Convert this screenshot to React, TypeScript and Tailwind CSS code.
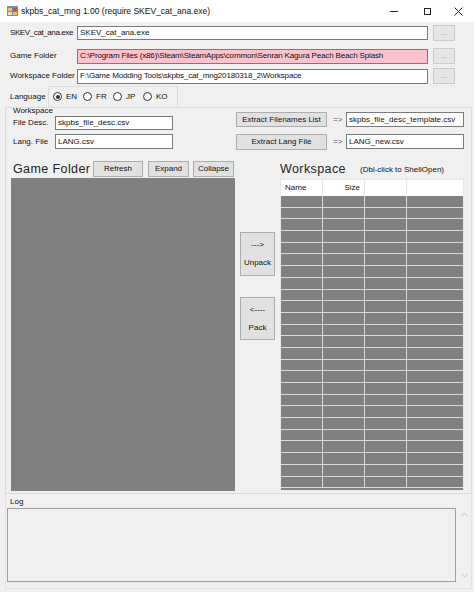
import React from 'react'

const font = { fontFamily: '"Liberation Sans", Arial, sans-serif' }

function TextBox({ value, className }: { value: string; className: string }) {
  return (
    <div
      className={`flex items-center border border-[#7a7a7a] bg-white pl-[2px] text-[8px] leading-none whitespace-nowrap overflow-hidden ${className}`}
    >
      {value}
    </div>
  )
}

function Btn({ title, className }: { title: React.ReactNode; className: string }) {
  return (
    <div
      className={`flex flex-col items-center justify-center border border-[#adadad] bg-[#e1e1e1] text-[8px] leading-none ${className}`}
    >
      {title}
    </div>
  )
}

function DotsBtn() {
  return (
    <div className="ml-[5px] flex h-[16px] w-[22px] items-center justify-center border border-[#cccccc] bg-[#e6e6e6] text-[8px] leading-none text-[#a0a0a0]">
      ...
    </div>
  )
}

function Radio({ label, checked }: { label: string; checked?: boolean }) {
  return (
    <div className="flex items-center gap-[4px] w-[30px]">
      <div className="flex h-[9px] w-[9px] items-center justify-center rounded-full border border-[#333] bg-white">
        {checked && <div className="h-[4px] w-[4px] rounded-full bg-[#333]" />}
      </div>
      <span className="text-[8px] leading-none">{label}</span>
    </div>
  )
}

export default function App() {
  const rows = Array.from({ length: 25 })
  return (
    <div className="relative h-[592px] w-[474px] overflow-hidden bg-[#f0f0f0] text-[#111]" style={font}>
      {/* title bar */}
      <div className="flex h-[22px] items-center bg-white">
        <svg className="ml-[7px]" width="11" height="10" viewBox="0 0 11 10">
          <rect x="0" y="0" width="11" height="10" fill="#6b8fc4" />
          <rect x="1" y="2" width="4" height="3" fill="#f3c53a" />
          <rect x="6" y="2" width="4" height="3" fill="#d94a3a" />
          <rect x="1" y="6" width="4" height="3" fill="#e8e1c8" />
          <rect x="6" y="6" width="4" height="3" fill="#f3c53a" />
        </svg>
        <span className="ml-[3px] text-[8.5px] leading-none">skpbs_cat_mng 1.00 (require SKEV_cat_ana.exe)</span>
        <div className="ml-auto flex items-center">
          <div className="h-[1px] w-[8px] bg-[#222]" />
          <div className="ml-[26px] h-[7px] w-[7px] border border-[#222]" />
          <svg className="ml-[23px] mr-[11px]" width="9" height="9" viewBox="0 0 9 9">
            <path d="M0.5 0.5 L8.5 8.5 M8.5 0.5 L0.5 8.5" stroke="#222" strokeWidth="1" />
          </svg>
        </div>
      </div>

      {/* path rows */}
      <div className="mt-[3px] flex h-[16px] items-center pl-[10px]">
        <span className="w-[67px] text-[8px] leading-none tracking-[-0.4px]">SKEV_cat_ana.exe</span>
        <TextBox value="SKEV_cat_ana.exe" className="h-[14px] w-[351px]" />
        <DotsBtn />
      </div>
      <div className="mt-[7px] flex h-[16px] items-center pl-[10px]">
        <span className="w-[67px] text-[8px] leading-none">Game Folder</span>
        <TextBox
          value="C:\Program Files (x86)\Steam\SteamApps\common\Senran Kagura Peach Beach Splash"
          className="h-[15px] w-[351px] !bg-[#fcc3cf] tracking-[-0.15px]"
        />
        <DotsBtn />
      </div>
      <div className="mt-[4px] flex h-[16px] items-center pl-[10px]">
        <span className="w-[67px] text-[8px] leading-none">Workspace Folder</span>
        <TextBox value="F:\Game Modding Tools\skpbs_cat_mng20180318_2\Workspace" className="h-[15px] w-[351px] tracking-[-0.15px]" />
        <DotsBtn />
      </div>

      {/* language */}
      <div className="mt-[2px] flex h-[21px] items-center pl-[10px]">
        <span className="w-[38px] text-[8px] leading-none">Language</span>
        <div className="flex h-[22px] w-[130px] items-center border border-[#dcdcdc] pl-[4px]">
          <Radio label="EN" checked />
          <Radio label="FR" />
          <Radio label="JP" />
          <Radio label="KO" />
        </div>
      </div>

      {/* main group */}
      <div className="mx-[5px] flex h-[387px] w-[467px] flex-col border border-[#dcdcdc]">
        <div className="flex">
          <div className="ml-[7px] flex flex-col">
            <span className="mt-[-3px] h-[11px] text-[8px] leading-[11px]">Workspace</span>
            <div className="flex h-[14px] items-center">
              <span className="w-[42px] text-[8px] leading-none">File Desc.</span>
              <TextBox value="skpbs_file_desc.csv" className="h-[14px] w-[118px]" />
            </div>
            <div className="mt-[4px] flex h-[15px] items-center">
              <span className="w-[42px] text-[8px] leading-none">Lang. File</span>
              <TextBox value="LANG.csv" className="h-[15px] w-[118px]" />
            </div>
          </div>
          <div className="ml-[63px] flex flex-col">
            <div className="mt-[4px] flex h-[15px] items-center">
              <Btn title="Extract Filenames List" className="h-[15px] w-[91px]" />
              <span className="ml-[6px] w-[13px] text-[8px] leading-none text-[#555]">=&gt;</span>
              <TextBox value="skpbs_file_desc_template.csv" className="h-[15px] w-[118px]" />
            </div>
            <div className="mt-[7px] flex h-[15px] items-center">
              <Btn title="Extract Lang File" className="h-[16px] w-[91px]" />
              <span className="ml-[6px] w-[13px] text-[8px] leading-none text-[#555]">=&gt;</span>
              <TextBox value="LANG_new.csv" className="h-[15px] w-[118px]" />
            </div>
          </div>
        </div>

        <div className="mt-[11px] flex">
          {/* game folder */}
          <div className="ml-[5px] flex w-[224px] flex-col">
            <div className="flex h-[18px] items-center">
              <span className="ml-[2px] w-[80px] text-[12.5px] leading-none tracking-[0.4px] text-[#222]">Game Folder</span>
              <Btn title="Refresh" className="h-[16px] w-[50px]" />
              <Btn title="Expand" className="ml-[5px] h-[16px] w-[41px]" />
              <Btn title="Collapse" className="ml-[4px] h-[16px] w-[41px]" />
            </div>
            <div className="h-[313px] bg-[#808080]" />
          </div>

          {/* pack buttons */}
          <div className="ml-[5px] flex w-[35px] flex-col">
            <Btn
              title={
                <>
                  <span>---&gt;</span>
                  <span className="mt-[10px]">Unpack</span>
                </>
              }
              className="mt-[72px] h-[44px] w-[35px]"
            />
            <Btn
              title={
                <>
                  <span>&lt;----</span>
                  <span className="mt-[10px]">Pack</span>
                </>
              }
              className="mt-[21px] h-[43px] w-[35px]"
            />
          </div>

          {/* workspace */}
          <div className="ml-[5px] flex w-[184px] flex-col">
            <div className="flex h-[19px] items-center">
              <span className="w-[80px] text-[12.5px] leading-none tracking-[0.4px] text-[#222]">Workspace</span>
              <span className="text-[8px] leading-none">(Dbl-click to ShellOpen)</span>
            </div>
            <div className="flex h-[312px] flex-col overflow-hidden border border-[#e8e8e8] bg-[#808080]">
              <div className="flex h-[16px] shrink-0 bg-white text-[8px] leading-none">
                <div className="flex w-[42px] items-center border-r border-[#e5e5e5] pl-[4px]">Name</div>
                <div className="flex w-[42px] items-center justify-end border-r border-[#e5e5e5] pr-[4px]">Size</div>
                <div className="w-[42px] border-r border-[#e5e5e5]" />
                <div className="flex-1" />
              </div>
              {rows.map((_, i) => (
                <div key={i} className="flex h-[11.7px] shrink-0 border-b border-[#d8d8d8]">
                  <div className="w-[42px] border-r border-[#d8d8d8]" />
                  <div className="w-[42px] border-r border-[#d8d8d8]" />
                  <div className="w-[42px] border-r border-[#d8d8d8]" />
                  <div className="flex-1" />
                </div>
              ))}
            </div>
          </div>
        </div>
      </div>

      {/* log */}
      <div className="mx-[5px] flex h-[95px] w-[467px] flex-col border-x border-b border-[#e4e4e4]">
        <span className="ml-[4px] mt-[3px] h-[10px] text-[8px] leading-[10px]">Log</span>
        <div className="mt-[1px] flex">
          <div className="ml-[1px] h-[74px] w-[449px] border border-[#a0a0a0] bg-[#f0f0f0]" />
          <div className="ml-[3px] flex h-[74px] w-[10px] flex-col items-center justify-between py-[4px]">
            <svg width="7" height="5" viewBox="0 0 7 5">
              <path d="M0.5 4 L3.5 1 L6.5 4" stroke="#c0c0c0" fill="none" />
            </svg>
            <svg width="7" height="5" viewBox="0 0 7 5">
              <path d="M0.5 1 L3.5 4 L6.5 1" stroke="#c0c0c0" fill="none" />
            </svg>
          </div>
        </div>
      </div>
    </div>
  )
}
